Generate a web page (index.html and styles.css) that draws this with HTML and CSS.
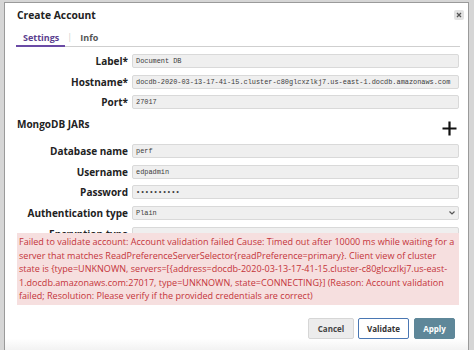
FILE: index.html
```html
<!DOCTYPE html>
<html>
<head>
<meta charset="utf-8">
<link rel="stylesheet" href="styles.css">
</head>
<body>
<div class="modal">
  <div class="header">
    <h1 class="title">Create Account</h1>
    <button class="close" aria-label="Close">
      <svg width="6" height="6" viewBox="0 0 6 6"><path d="M1 1L5 5M5 1L1 5" stroke="#555" stroke-width="1.3" fill="none"/></svg>
    </button>
  </div>
  <div class="tabs">
    <span class="tab active">Settings</span><span class="sep">|</span><span class="tab">Info</span>
  </div>
  <div class="body">
    <div class="form">
      <label class="lbl">Label*</label><div class="input">Document DB</div>
      <label class="lbl">Hostname*</label><div class="input">docdb-2020-03-13-17-41-15.cluster-c80glcxzlkj7.us-east-1.docdb.amazonaws.com</div>
      <label class="lbl">Port*</label><div class="input">27017</div>
      <div class="jars">
        <span class="jars-title">MongoDB JARs</span>
        <svg class="plus" width="15" height="15" viewBox="0 0 15 15"><path d="M7.5 0.5V14.5M0.5 7.5H14.5" stroke="#111" stroke-width="2.2" fill="none"/></svg>
      </div>
      <label class="lbl">Database name</label><div class="input">perf</div>
      <label class="lbl">Username</label><div class="input">edpadmin</div>
      <label class="lbl">Password</label><div class="input dots">••••••••••</div>
      <label class="lbl">Authentication type</label>
      <div class="input select">Plain
        <svg class="chev" width="6" height="4" viewBox="0 0 6 4"><path d="M0.5 0.5L3 3L5.5 0.5" stroke="#555" stroke-width="1.2" fill="none"/></svg>
      </div>
      <label class="lbl enc">Encryption type</label>
      <div class="input select"></div>
    </div>
    <div class="alert">Failed to validate account: Account validation failed Cause: Timed out after 10000 ms while waiting for a<br>server that matches ReadPreferenceServerSelector{readPreference=primary}. Client view of cluster<br>state is {type=UNKNOWN, servers=[{address=docdb-2020-03-13-17-41-15.cluster-c80glcxzlkj7.us-east-<br>1.docdb.amazonaws.com:27017, type=UNKNOWN, state=CONNECTING}] (Reason: Account validation<br>failed; Resolution: Please verify if the provided credentials are correct)</div>
  </div>
  <div class="footer">
    <button class="btn cancel">Cancel</button>
    <button class="btn validate">Validate</button>
    <button class="btn apply">Apply</button>
  </div>
</div>
</body>
</html>
```

FILE: styles.css
```css
html, body {
  margin: 0;
  padding: 0;
}
body {
  background: #d6d6d6;
  padding: 2px 0 0 4px;
  height: 348px;
  overflow: hidden;
  font-family: "Open Sans", "Noto Sans", sans-serif;
  color: #222;
}
.modal {
  width: 463px;
  height: 360px;
  background: #fff;
  border: 1px solid #9a9a9a;
  position: relative;
  overflow: hidden;
}
.header {
  padding: 5px 12px 0;
}
.title {
  margin: 0;
  font-size: 10.3px;
  line-height: 15px;
  font-weight: 700;
  color: #222;
}
.close {
  position: absolute;
  top: 7px;
  right: 4px;
  width: 10px;
  height: 10px;
  padding: 0;
  border: none;
  border-radius: 2px;
  background: #e3e3e3;
  display: flex;
  align-items: center;
  justify-content: center;
}
.tabs {
  margin: 8px 8px 0 11px;
  border-bottom: 1px solid #cfcfcf;
  display: flex;
  align-items: flex-end;
  font-size: 9px;
  line-height: 12px;
  font-weight: 700;
}
.tab {
  padding: 0 6px 1px 7px;
  border-bottom: 2px solid transparent;
  margin-bottom: -1px;
  color: #555;
}
.tab.active {
  color: #5b3f8f;
  border-bottom-color: #6a4aa5;
}
.sep {
  color: #cfcfcf;
  font-weight: 400;
  padding: 0 1px 3px 2px;
}
.body {
  position: relative;
  height: 259px;
  overflow: hidden;
}
.form {
  padding: 7px 9px 0 11px;
  display: grid;
  grid-template-columns: 112px 1fr;
  column-gap: 4px;
  row-gap: 6.7px;
}
.lbl {
  font-size: 10px;
  line-height: 14px;
  font-weight: 700;
  text-align: right;
  color: #222;
  white-space: nowrap;
}
.input {
  height: 12px;
  border: 1px solid #d9d9d9;
  border-radius: 2px;
  background: #efefef;
  font-family: "Liberation Mono", "DejaVu Sans Mono", monospace;
  font-size: 6.9px;
  line-height: 12px;
  padding-left: 3px;
  color: #3b3b3b;
  white-space: nowrap;
  overflow: hidden;
  position: relative;
}
.dots {
  font-size: 7px;
  letter-spacing: 0.2px;
}
.chev {
  position: absolute;
  right: 3px;
  top: 4px;
}
.jars {
  grid-column: 1 / -1;
  display: flex;
  justify-content: space-between;
  height: 21.3px;
}
.jars-title {
  font-size: 10px;
  line-height: 16px;
  font-weight: 700;
  padding-left: 1px;
}
.plus {
  align-self: flex-end;
  margin-right: 2px;
  margin-bottom: 1px;
}
.alert {
  position: absolute;
  top: 186px;
  left: 12px;
  width: 440px;
  padding: 2px 0 2px 2px;
  background: #f6dfdf;
  color: #c4343a;
  font-size: 9.05px;
  line-height: 13.5px;
  white-space: nowrap;
}
.footer {
  height: 48px;
  box-sizing: border-box;
  padding: 12px 13px 0 0;
  display: flex;
  justify-content: flex-end;
  align-items: flex-start;
  gap: 4px;
  background: linear-gradient(to bottom, #fff 0, #fff 68%, #eeeeee 100%);
}
.btn {
  height: 21px;
  border-radius: 2px;
  font-family: "Open Sans", "Noto Sans", sans-serif;
  font-size: 8px;
  font-weight: 700;
  padding: 0;
  box-sizing: border-box;
}
.cancel {
  width: 46px;
  background: #ececec;
  border: 1px solid #d6d6d6;
  color: #444;
}
.validate {
  width: 51px;
  background: #fff;
  border: 1.5px solid #4a77b3;
  color: #333;
  margin-right: 1px;
}
.apply {
  width: 41px;
  background: #5e8799;
  border: 1px solid #5e8799;
  color: #fff;
}
```
